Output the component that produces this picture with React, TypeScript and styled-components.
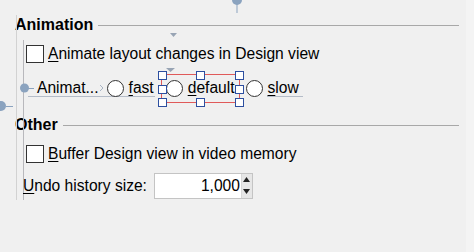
import React from "react";
import styled, { createGlobalStyle } from "styled-components";

const Global = createGlobalStyle`
  html, body { margin: 0; padding: 0; background: #f0f0f0; }
  #root { width: 474px; height: 252px; }
`;

const Canvas = styled.div`
  position: relative;
  width: 474px;
  height: 252px;
  box-sizing: border-box;
  padding: 15px 15px 0 15px;
  background: #f0f0f0;
  overflow: hidden;
  font-family: "Liberation Sans", Arial, sans-serif;
  font-size: 15.6px;
  color: #000;
`;

const SectionHeader = styled.div<{ $mt?: number }>`
  display: flex;
  align-items: center;
  gap: 5px;
  height: 20px;
  margin-top: ${(p) => p.$mt ?? 0}px;
`;

const Title = styled.span`
  font-weight: bold;
  font-size: 16px;
  line-height: 20px;
`;

const Rule = styled.div`
  flex: 1;
  height: 1px;
  background: #a8a8a8;
`;

const Body = styled.div`
  display: flex;
  flex-direction: column;
  padding-left: 11px;
`;

const Row = styled.div<{ $mt: number; $h?: number }>`
  display: flex;
  align-items: center;
  height: ${(p) => p.$h ?? 26}px;
  margin-top: ${(p) => p.$mt}px;
  position: relative;
`;

const CheckBox = styled.span`
  width: 16px;
  height: 16px;
  border: 1px solid #333;
  background: #fff;
  flex: none;
  margin-right: 4px;
`;

const Label = styled.span<{ $ml?: number }>`
  white-space: nowrap;
  line-height: 20px;
  margin-left: ${(p) => p.$ml ?? 0}px;
`;

const Mn = styled.span`
  text-decoration: underline;
  text-underline-offset: 2px;
`;

const RadioItem = styled.span<{ $ml: number }>`
  position: relative;
  display: inline-flex;
  align-items: center;
  gap: 5px;
  height: 20px;
  margin-left: ${(p) => p.$ml}px;
`;

const RadioCircle = styled.span`
  width: 15px;
  height: 15px;
  border: 1px solid #333;
  border-radius: 50%;
  background: #fff;
  flex: none;
`;

const SelFrame = styled.span`
  position: absolute;
  top: -4px;
  bottom: -5px;
  left: -5px;
  right: -5px;
  border: 1px solid #e05a5a;
  pointer-events: none;
`;

const Handle = styled.span<{ $x: string; $y: string }>`
  position: absolute;
  left: ${(p) => p.$x};
  top: ${(p) => p.$y};
  width: 7px;
  height: 7px;
  margin: -4px 0 0 -4px;
  background: #fff;
  border: 1px solid #2d4fa0;
`;

const SpinBox = styled.div`
  display: flex;
  width: 99px;
  height: 26px;
  margin-left: 7px;
  border: 1px solid #c4c4c4;
  background: #fff;
  box-sizing: border-box;
`;

const SpinValue = styled.span`
  flex: 1;
  text-align: right;
  line-height: 24px;
  padding-right: 1px;
`;

const SpinButtons = styled.div`
  display: flex;
  flex-direction: column;
  width: 10px;
  background: #e6e6e6;
  border-left: 1px solid #d8d8d8;
`;

const SpinBtn = styled.div`
  flex: 1;
  display: flex;
  align-items: center;
  justify-content: center;
`;

const Overlay = styled.svg`
  position: absolute;
  left: 0;
  top: 0;
  pointer-events: none;
`;

const DotColor = "#8ba3bf";

export default function App() {
  const handles: [string, string][] = [
    ["0%", "0%"], ["50%", "0%"], ["100%", "0%"],
    ["0%", "50%"], ["100%", "50%"],
    ["0%", "100%"], ["50%", "100%"], ["100%", "100%"],
  ];
  return (
    <>
      <Global />
      <Canvas>
        <Overlay width="474" height="252">
          <line x1="16.5" y1="15" x2="16.5" y2="200" stroke="#d2d2d2" />
          <line x1="23.5" y1="40" x2="23.5" y2="200" stroke="#b8b8bc" />
          <rect x="466" y="0" width="8" height="252" fill="#f4f4f4" />
          <line x1="28" y1="96.5" x2="155" y2="96.5" stroke="#b4bcc8" />
          <line x1="267" y1="96.5" x2="303" y2="96.5" stroke="#b4bcc8" />
          <line x1="237" y1="4" x2="237" y2="13" stroke={DotColor} />
          <circle cx="237" cy="0" r="5" fill={DotColor} />
          <line x1="6" y1="106.5" x2="13" y2="106.5" stroke={DotColor} />
          <circle cx="1" cy="106" r="5" fill={DotColor} />
          <line x1="28" y1="88.5" x2="34" y2="88.5" stroke={DotColor} />
          <circle cx="24.5" cy="88" r="4.5" fill={DotColor} />
          <path d="M170 33 L177 33 L173.5 37 Z" fill="#98a4b4" />
          <path d="M166 68 L175 68 L170.5 72 Z" fill="#98a4b4" />
          <path d="M100 85 L103 88 L100 91" fill="none" stroke="#a8b4c4" />
        </Overlay>

        <SectionHeader>
          <Title>Animation</Title>
          <Rule />
        </SectionHeader>
        <Body>
          <Row $mt={6}>
            <CheckBox />
            <Label>
              <Mn>A</Mn>nimate layout changes in Design view
            </Label>
          </Row>
          <Row $mt={8}>
            <Label $ml={11}>Animat...</Label>
            <RadioItem $ml={8}>
              <RadioCircle />
              <span>
                <Mn>f</Mn>ast
              </span>
            </RadioItem>
            <RadioItem $ml={12}>
              <RadioCircle />
              <span>
                <Mn>d</Mn>efault
              </span>
              <SelFrame>
                {handles.map(([x, y]) => (
                  <Handle key={x + y} $x={x} $y={y} />
                ))}
              </SelFrame>
            </RadioItem>
            <RadioItem $ml={11}>
              <RadioCircle />
              <span>
                <Mn>s</Mn>low
              </span>
            </RadioItem>
          </Row>
        </Body>

        <SectionHeader $mt={14}>
          <Title>Other</Title>
          <Rule />
        </SectionHeader>
        <Body>
          <Row $mt={6}>
            <CheckBox />
            <Label>
              <Mn>B</Mn>uffer Design view in video memory
            </Label>
          </Row>
          <Row $mt={5} $h={27}>
            <Label $ml={-3}>
              <Mn>U</Mn>ndo history size:
            </Label>
            <SpinBox>
              <SpinValue>1,000</SpinValue>
              <SpinButtons>
                <SpinBtn>
                  <svg width="7" height="5" viewBox="0 0 7 5">
                    <path d="M3.5 0 L7 5 L0 5 Z" fill="#222" />
                  </svg>
                </SpinBtn>
                <SpinBtn>
                  <svg width="7" height="5" viewBox="0 0 7 5">
                    <path d="M0 0 L7 0 L3.5 5 Z" fill="#222" />
                  </svg>
                </SpinBtn>
              </SpinButtons>
            </SpinBox>
          </Row>
        </Body>
      </Canvas>
    </>
  );
}
